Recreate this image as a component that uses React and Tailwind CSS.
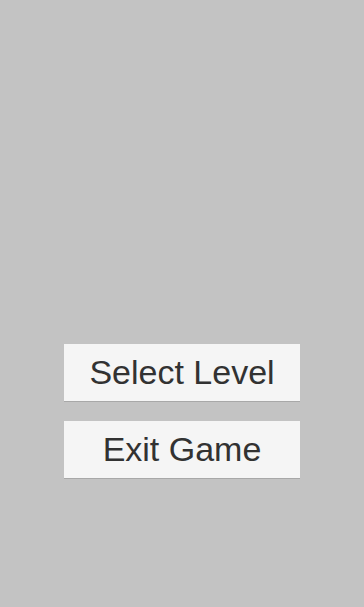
import React from "react";

const MenuButton = ({ label }) => (
  <button className="w-[236px] h-[58px] pb-[2px] bg-[#f5f5f5] border-b border-[#a8a8a8] text-[#323232] text-[34px] leading-none flex items-center justify-center">
    {label}
  </button>
);

const App = () => {
  return (
    <div
      className="w-full h-[607px] bg-[#c3c3c3] flex flex-col items-center pt-[344px] gap-[19px]"
      style={{ fontFamily: '"Liberation Sans", Arial, sans-serif' }}
    >
      <MenuButton label="Select Level" />
      <MenuButton label="Exit Game" />
    </div>
  );
};

export default App;
